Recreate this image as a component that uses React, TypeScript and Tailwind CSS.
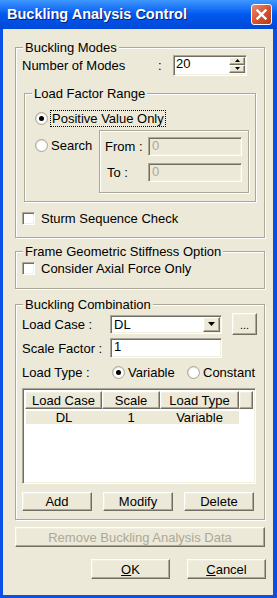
import React from 'react';

// Classic 3D borders used all over the dialog
const sunken =
  'border border-t-[#ACA899] border-l-[#ACA899] border-b-white border-r-white shadow-[inset_1px_1px_0_#716F64,inset_-1px_-1px_0_#F1EFE2]';
const raised =
  'border border-t-white border-l-white border-b-[#716F64] border-r-[#716F64] shadow-[inset_-1px_-1px_0_#ACA899,inset_1px_1px_0_#F1EFE2]';
const etched = 'border border-[#ACA899] shadow-[inset_1px_1px_0_#fff,1px_1px_0_#fff]';

interface GroupProps {
  title: string;
  className?: string;
  children?: React.ReactNode;
}

const Group: React.FC<GroupProps> = ({ title, className = '', children }) => (
  <div className={`relative ${etched} ${className}`}>
    {/* legend sits over the top line */}
    <span className="absolute left-[7px] top-[-8px] bg-[#ECE9D8] px-[2px] leading-[15px]">{title}</span>
    {children}
  </div>
);

const Radio: React.FC<{ checked?: boolean }> = ({ checked }) => (
  <span className="flex h-[13px] w-[13px] shrink-0 items-center justify-center rounded-full border border-[#ACA899] bg-gradient-to-br from-[#DCDAD0] to-white">
    <span className="flex h-[9px] w-[9px] items-center justify-center rounded-full bg-white">
      {checked && <span className="h-[5px] w-[5px] rounded-full bg-black" />}
    </span>
  </span>
);

const Check: React.FC = () => (
  <span className={`block h-[13px] w-[13px] shrink-0 bg-white ${sunken}`} />
);

const Button: React.FC<{ className?: string; disabled?: boolean; children: React.ReactNode }> = ({
  className = '',
  disabled,
  children,
}) => (
  <div
    className={`flex items-center justify-center bg-[#ECE9D8] ${raised} ${
      disabled ? 'text-[#ACA899]' : 'text-black'
    } ${className}`}
  >
    {children}
  </div>
);

const HeaderCell: React.FC<{ className?: string; children?: React.ReactNode }> = ({ className = '', children }) => (
  <div className={`flex h-[18px] items-center justify-center bg-[#ECE9D8] ${raised} ${className}`}>{children}</div>
);

const Triangle: React.FC<{ up?: boolean; size?: number }> = ({ up, size = 7 }) => {
  const h = Math.ceil(size / 2);
  return (
    <svg width={size} height={h + 1} viewBox={`0 0 ${size} ${h + 1}`}>
      {up ? (
        <polygon points={`0,${h} ${size},${h} ${size / 2},0`} fill="#000" />
      ) : (
        <polygon points={`0,0 ${size},0 ${size / 2},${h}`} fill="#000" />
      )}
    </svg>
  );
};

export default function App() {
  return (
    <div className="flex h-[598px] w-[277px] flex-col bg-[#0B4FE4] text-[13px] leading-[15px] text-black [font-family:'Liberation_Sans',Arial,sans-serif]">
      {/* Title bar */}
      <div className="flex h-[29px] shrink-0 items-center justify-between bg-gradient-to-b from-[#3F97FF] via-[#0058EE] to-[#0049D6] pl-[7px] pr-[5px]">
        <span className="text-[14.5px] font-bold text-white [text-shadow:1px_1px_0_#0A1E78]">
          Buckling Analysis Control
        </span>
        <div className="flex h-[21px] w-[21px] items-center justify-center rounded-[3px] border border-white bg-gradient-to-br from-[#EB8A6D] via-[#D9532F] to-[#B53A18]">
          <svg width="11" height="11" viewBox="0 0 11 11">
            <path d="M1.5 1.5 L9.5 9.5 M9.5 1.5 L1.5 9.5" stroke="#fff" strokeWidth="2.4" strokeLinecap="square" />
          </svg>
        </div>
      </div>

      {/* Body */}
      <div className="ml-[3px] mr-[4px] mb-[3px] flex flex-1 flex-col bg-[#ECE9D8] pl-[12px] pt-[18px]">
        {/* Buckling Modes */}
        <Group title="Buckling Modes" className="h-[191px] w-[250px] pl-[6px] pt-[7px]">
          <div className="flex h-[21px] items-center">
            <span className="w-[136px]">Number of Modes</span>
            <span className="w-[15px]">:</span>
            <div className={`relative h-[21px] w-[74px] bg-white ${sunken}`}>
              <span className="absolute left-[2px] top-[0px]">20</span>
              <div className="absolute right-[1px] top-[1px] flex flex-col">
                <div className={`flex h-[8px] w-[16px] items-center justify-center bg-[#ECE9D8] ${raised}`}>
                  <Triangle up size={5} />
                </div>
                <div className={`flex h-[8px] w-[16px] items-center justify-center bg-[#ECE9D8] ${raised}`}>
                  <Triangle size={5} />
                </div>
              </div>
            </div>
          </div>

          {/* Load Factor Range */}
          <Group title="Load Factor Range" className="ml-[2px] mt-[17px] h-[109px] w-[232px] pl-[10px] pt-[16px]">
            <div className="flex h-[17px] items-center gap-[2px]">
              <Radio checked />
              <span className="border border-dotted border-black px-[1px] leading-[15px]">Positive Value Only</span>
            </div>
            <div className="mt-[3px] flex">
              <div className="w-[64px]">
                <div className="mt-[7px] flex h-[17px] items-center gap-[3px]">
                  <Radio />
                  <span>Search</span>
                </div>
              </div>
              <div className={`h-[63px] w-[150px] pl-[5px] pt-[6px] ${etched}`}>
                <div className="flex h-[19px] items-center">
                  <span className="w-[43px]">From :</span>
                  <div className={`h-[19px] w-[94px] bg-[#ECE9D8] pl-[3px] text-[#ACA899] ${sunken}`}>0</div>
                </div>
                <div className="mt-[7px] flex h-[19px] items-center">
                  <span className="w-[43px] pl-[2px]">To :</span>
                  <div className={`h-[19px] w-[94px] bg-[#ECE9D8] pl-[3px] text-[#ACA899] ${sunken}`}>0</div>
                </div>
              </div>
            </div>
          </Group>

          <div className="mt-[10px] flex h-[13px] items-center gap-[6px]">
            <Check />
            <span>Sturm Sequence Check</span>
          </div>
        </Group>

        {/* Frame Geometric Stiffness Option */}
        <Group title="Frame Geometric Stiffness Option" className="mt-[13px] h-[38px] w-[250px] pl-[6px] pt-[10px]">
          <div className="flex h-[13px] items-center gap-[6px]">
            <Check />
            <span>Consider Axial Force Only</span>
          </div>
        </Group>

        {/* Buckling Combination */}
        <Group title="Buckling Combination" className="mt-[15px] h-[216px] w-[250px] pl-[6px] pt-[8px]">
          <div className="flex h-[22px] items-center">
            <span className="w-[88px]">Load Case :</span>
            <div className={`flex h-[19px] w-[112px] items-center justify-between bg-white pl-[3px] pr-[1px] ${sunken}`}>
              <span>DL</span>
              <div className={`flex h-[15px] w-[17px] items-center justify-center bg-[#ECE9D8] ${raised}`}>
                <Triangle size={7} />
              </div>
            </div>
            <Button className="ml-[10px] h-[22px] w-[25px] items-end pb-[3px] text-[11px] leading-[11px]">...</Button>
          </div>

          <div className="mt-[3px] flex h-[20px] items-center">
            <span className="w-[88px]">Scale Factor :</span>
            <div className={`h-[20px] w-[112px] bg-white pl-[3px] ${sunken}`}>1</div>
          </div>

          <div className="mt-[6px] flex h-[17px] items-center">
            <span className="w-[90px]">Load Type :</span>
            <div className="flex w-[75px] items-center gap-[3px]">
              <Radio checked />
              <span>Variable</span>
            </div>
            <div className="flex items-center gap-[3px]">
              <Radio />
              <span>Constant</span>
            </div>
          </div>

          {/* list */}
          <div className={`mt-[7px] h-[96px] w-[234px] bg-white p-[2px] ${sunken}`}>
            <div className="flex">
              <HeaderCell className="w-[77px]">Load Case</HeaderCell>
              <HeaderCell className="w-[58px]">Scale</HeaderCell>
              <HeaderCell className="w-[79px]">Load Type</HeaderCell>
              <HeaderCell className="flex-1" />
            </div>
            <div className="ml-[1px] mt-[2px] flex h-[13px] w-[213px] items-center bg-[#ECE9D8] leading-[13px]">
              <span className="w-[76px] text-center">DL</span>
              <span className="w-[58px] text-center">1</span>
              <span className="w-[79px] text-center">Variable</span>
            </div>
          </div>

          <div className="mt-[8px] flex gap-[11px]">
            <Button className="h-[19px] w-[70px]">Add</Button>
            <Button className="h-[19px] w-[70px]">Modify</Button>
            <Button className="h-[19px] w-[70px]">Delete</Button>
          </div>
        </Group>

        <Button disabled className="mt-[7px] h-[20px] w-[250px]">
          Remove Buckling Analysis Data
        </Button>

        <div className="mt-[12px] flex gap-[17px] pl-[76px]">
          <Button className="h-[20px] w-[79px]">
            <span className="underline">O</span>K
          </Button>
          <Button className="h-[20px] w-[79px]">
            <span className="underline">C</span>ancel
          </Button>
        </div>
      </div>
    </div>
  );
}
